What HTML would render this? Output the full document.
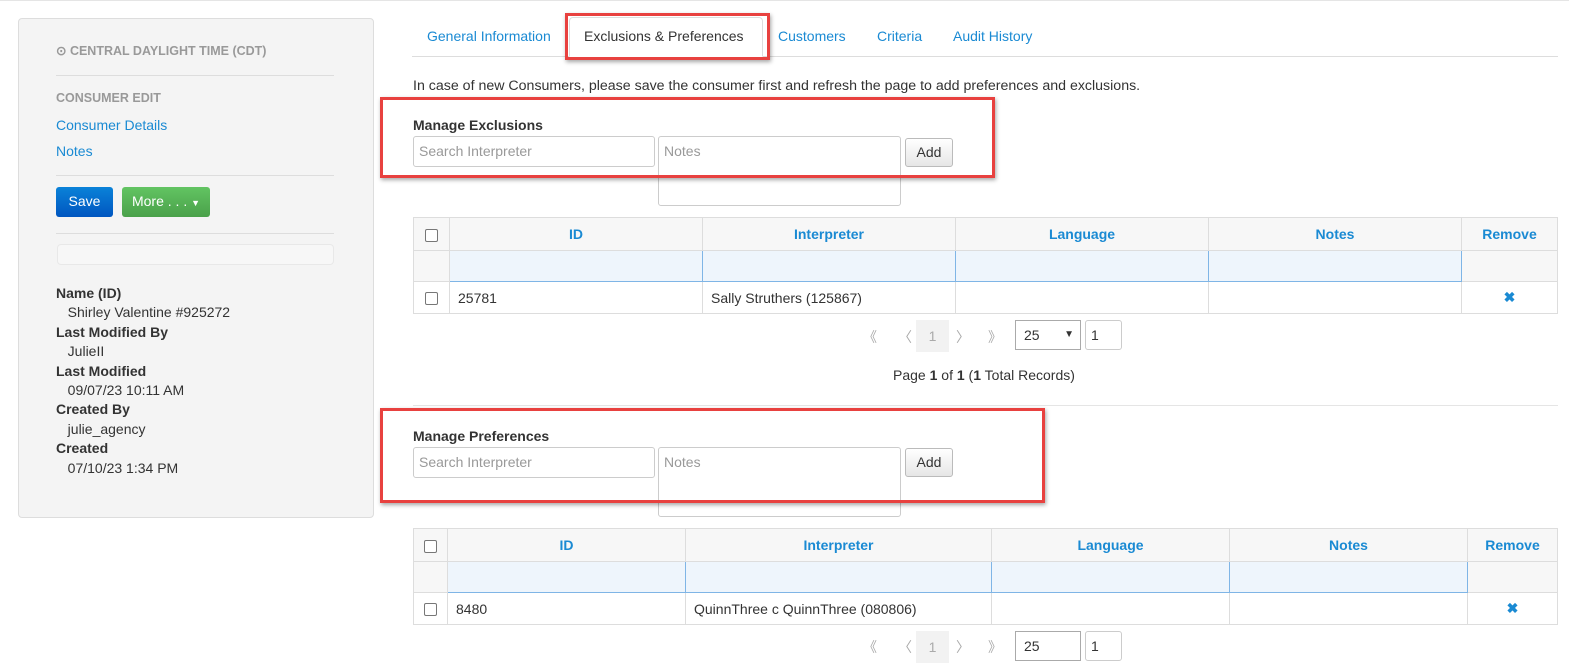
<!DOCTYPE html>
<html><head><style>
*{box-sizing:border-box}
body{margin:0;width:1569px;height:648px;overflow:hidden;background:#fff;font-family:"Liberation Sans",Arial,sans-serif;font-size:14px;color:#333;position:relative}
.a{position:absolute}
.side{left:18px;top:18px;width:356px;height:500px;background:#f4f4f4;border:1px solid #ddd;border-radius:4px}
.hr{position:absolute;height:1px;background:#ddd;left:56px;width:278px}
.gh{color:#999;font-weight:bold;font-size:12.5px}
.lnk{color:#1a8ad3}
.btn{position:absolute;border-radius:3px;color:#fff;font-size:14px;text-align:center;line-height:29px}
.tab{position:absolute;top:28px;color:#1a8ad3;font-size:14px}
.red{position:absolute;border:3px solid #e8413f;box-shadow:1px 2px 4px rgba(0,0,0,.35)}
.inp{position:absolute;border:1px solid #ccc;border-radius:3px;background:#fff;color:#999;padding:6px 5px;font-size:14px}
.addb{position:absolute;width:48px;height:29px;border:1px solid #bbb;border-radius:3px;background:linear-gradient(#fff,#e6e6e6);text-align:center;line-height:27px;font-size:14px;color:#333}
table{position:absolute;border-collapse:collapse;left:413px;width:1145px}
td{border:1px solid #ddd;height:32px;padding:0 0 0 8px;font-size:14px}
th{border:1px solid #ddd;height:33px;background:#f7f7f7;color:#1a8ad3;font-size:14px}
tr.f td{background:#f7f7f7;height:31px}
tr.f td.b{background:#eef5fc;border:1px solid #7fb5e6}
.cb{display:inline-block;width:13px;height:13px;border:1px solid #777;border-radius:2px;background:#fff;vertical-align:middle}
td.c{padding:0;text-align:center}
.x{color:#1a8ad3;font-weight:bold;text-align:center;padding:0}
.pg{position:absolute;color:#aaa;font-size:14px}
</style></head><body>
<div class="a" style="left:0;top:0;width:1569px;height:1px;background:#e5e5e5"></div>
<div class="a side"></div>
<div class="a gh" style="left:56px;top:43px">⊙ CENTRAL DAYLIGHT TIME (CDT)</div>
<div class="hr" style="top:75px"></div>
<div class="a gh" style="left:56px;top:91px">CONSUMER EDIT</div>
<div class="a lnk" style="left:56px;top:117px">Consumer Details</div>
<div class="a lnk" style="left:56px;top:143px">Notes</div>
<div class="hr" style="top:175px"></div>
<div class="btn" style="left:56px;top:187px;width:57px;height:30px;background:linear-gradient(#0a82d8,#0056c0)">Save</div>
<div class="btn" style="left:122px;top:187px;width:88px;height:30px;background:linear-gradient(#62c462,#4aa14a)">More . . . <span style="font-size:9px">▼</span></div>
<div class="hr" style="top:233px"></div>
<div class="a" style="left:57px;top:244px;width:277px;height:21px;background:#f7f7f7;border:1px solid #e8e8e8;border-radius:4px"></div>
<div class="a" style="left:56px;top:284px;line-height:19.4px;font-size:14px">
<b>Name (ID)</b><br>&nbsp;&nbsp;&nbsp;Shirley Valentine #925272<br><b>Last Modified By</b><br>&nbsp;&nbsp;&nbsp;JulieII<br><b>Last Modified</b><br>&nbsp;&nbsp;&nbsp;09/07/23 10:11 AM<br><b>Created By</b><br>&nbsp;&nbsp;&nbsp;julie_agency<br><b>Created</b><br>&nbsp;&nbsp;&nbsp;07/10/23 1:34 PM</div>

<div class="a" style="left:412px;top:56px;width:1146px;height:1px;background:#ddd"></div>
<div class="tab" style="left:427px">General Information</div>
<div class="a" style="left:569px;top:17px;width:194px;height:40px;border:1px solid #ddd;border-bottom:1px solid #fff;background:#fff;border-radius:4px 4px 0 0"></div>
<div class="tab" style="left:584px;color:#333">Exclusions &amp; Preferences</div>
<div class="red" style="left:565px;top:13px;width:205px;height:47px"></div>
<div class="tab" style="left:778px">Customers</div>
<div class="tab" style="left:877px">Criteria</div>
<div class="tab" style="left:953px">Audit History</div>

<div class="a" style="left:413px;top:78px;font-size:14.2px">In case of new Consumers, please save the consumer first and refresh the page to add preferences and exclusions.</div>

<div class="a" style="left:413px;top:117px;font-weight:bold">Manage Exclusions</div>
<div class="inp" style="left:413px;top:136px;width:242px;height:31px">Search Interpreter</div>
<div class="inp" style="left:658px;top:136px;width:243px;height:70px">Notes</div>
<div class="addb" style="left:905px;top:138px">Add</div>
<div class="red" style="left:380px;top:97px;width:615px;height:81px"></div>

<table style="top:217px">
<tr><th style="width:36px"><span class="cb"></span></th><th style="width:253px">ID</th><th style="width:253px">Interpreter</th><th style="width:253px">Language</th><th style="width:253px">Notes</th><th>Remove</th></tr>
<tr class="f"><td></td><td class="b"></td><td class="b"></td><td class="b"></td><td class="b"></td><td></td></tr>
<tr><td class="c"><span class="cb"></span></td><td>25781</td><td>Sally Struthers (125867)</td><td></td><td></td><td class="x">✖</td></tr>
</table>

<div class="pg" style="left:863px;top:327px">《</div>
<div class="pg" style="left:898px;top:327px">〈</div>
<div class="a" style="left:916px;top:320px;width:33px;height:32px;background:#f2f2f2;color:#aaa;text-align:center;line-height:32px">1</div>
<div class="pg" style="left:956px;top:327px">〉</div>
<div class="pg" style="left:988px;top:327px">》</div>
<div class="a" style="left:1015px;top:320px;width:66px;height:30px;border:1px solid #aaa;padding:6px 8px">25<span style="position:absolute;right:6px;font-size:10px;top:8px">▼</span></div>
<div class="a" style="left:1085px;top:320px;width:37px;height:30px;border:1px solid #ccc;border-radius:3px;padding:6px 5px">1</div>
<div class="a" style="left:893px;top:367px">Page <b>1</b> of <b>1</b> (<b>1</b> Total Records)</div>
<div class="a" style="left:413px;top:405px;width:1145px;height:1px;background:#e5e5e5"></div>

<div class="a" style="left:413px;top:428px;font-weight:bold">Manage Preferences</div>
<div class="inp" style="left:413px;top:447px;width:242px;height:31px">Search Interpreter</div>
<div class="inp" style="left:658px;top:447px;width:243px;height:70px">Notes</div>
<div class="addb" style="left:905px;top:448px">Add</div>
<div class="red" style="left:380px;top:408px;width:665px;height:95px"></div>

<table style="top:528px">
<tr><th style="width:34px"><span class="cb"></span></th><th style="width:238px">ID</th><th style="width:306px">Interpreter</th><th style="width:238px">Language</th><th style="width:238px">Notes</th><th>Remove</th></tr>
<tr class="f"><td></td><td class="b"></td><td class="b"></td><td class="b"></td><td class="b"></td><td></td></tr>
<tr><td class="c"><span class="cb"></span></td><td>8480</td><td>QuinnThree c QuinnThree (080806)</td><td></td><td></td><td class="x">✖</td></tr>
</table>

<div class="pg" style="left:863px;top:637px">《</div>
<div class="pg" style="left:898px;top:637px">〈</div>
<div class="a" style="left:916px;top:631px;width:33px;height:32px;background:#f2f2f2;color:#aaa;text-align:center;line-height:32px">1</div>
<div class="pg" style="left:956px;top:637px">〉</div>
<div class="pg" style="left:988px;top:637px">》</div>
<div class="a" style="left:1015px;top:631px;width:66px;height:30px;border:1px solid #aaa;padding:6px 8px">25</div>
<div class="a" style="left:1085px;top:631px;width:37px;height:30px;border:1px solid #ccc;border-radius:3px;padding:6px 5px">1</div>
</body></html>
